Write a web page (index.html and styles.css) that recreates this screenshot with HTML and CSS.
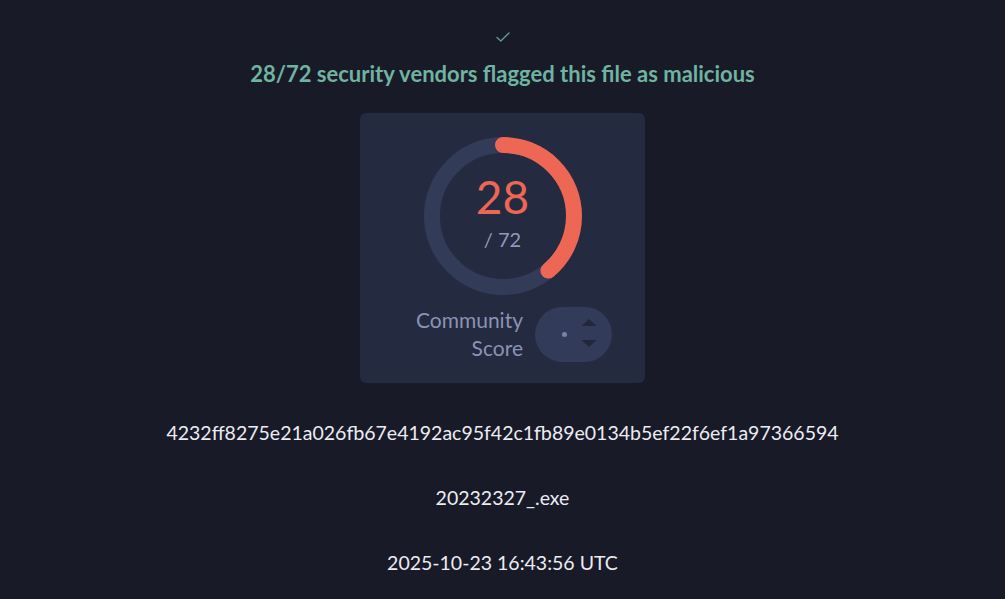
FILE: index.html
```html
<!DOCTYPE html>
<html lang="en">
<head>
<meta charset="utf-8">
<title>File report</title>
<link rel="stylesheet" href="styles.css">
</head>
<body>
<main class="page">
  <svg class="check" width="16" height="12" viewBox="0 0 16 12" aria-hidden="true">
    <path d="M2 6.5 L5.8 10 L14 2" fill="none" stroke="#5f9a97" stroke-width="1.4" stroke-linecap="round" stroke-linejoin="round"/>
  </svg>
  <h1 class="title">28/72 security vendors flagged this file as malicious</h1>
  <section class="card">
    <div class="donut">
      <svg width="160" height="160" viewBox="0 0 160 160" aria-hidden="true">
        <circle cx="80" cy="80" r="71" fill="none" stroke="#323b58" stroke-width="16"/>
        <circle cx="80" cy="80" r="71" fill="none" stroke="#ee6754" stroke-width="16" stroke-linecap="round" stroke-dasharray="173.5 1000" transform="rotate(-90 80 80)"/>
      </svg>
      <div class="donut-label">
        <span class="count">28</span>
        <span class="total">/ 72</span>
      </div>
    </div>
    <div class="community">
      <div class="community-label">Community<br>Score</div>
      <div class="vote">
        <span class="dot"></span>
        <span class="arrows">
          <svg width="20" height="36" viewBox="0 0 20 36" aria-hidden="true">
            <path d="M10 3 L17.5 10 L2.5 10 Z" fill="#222839"/>
            <path d="M2.5 24 L17.5 24 L10 31 Z" fill="#222839"/>
          </svg>
        </span>
      </div>
    </div>
  </section>
  <p class="meta">4232ff8275e21a026fb67e4192ac95f42c1fb89e0134b5ef22f6ef1a97366594</p>
  <p class="meta">20232327_.exe</p>
  <p class="meta">2025-10-23 16:43:56 UTC</p>
</main>
</body>
</html>
```
FILE: styles.css
```css
html, body {
  margin: 0;
  padding: 0;
  background: #181a28;
  font-family: Lato, "Open Sans", "Liberation Sans", sans-serif;
  color: #ececf2;
}

.page {
  display: flex;
  flex-direction: column;
  align-items: center;
  padding-top: 31px;
}

.check {
  display: block;
}

.title {
  margin: 17px 0 0;
  font-size: 22px;
  font-weight: 700;
  line-height: 28px;
  color: #6fb3a0;
}

.card {
  margin-top: 25px;
  width: 285px;
  height: 270px;
  box-sizing: border-box;
  padding-top: 23px;
  background: #242a40;
  border-radius: 6px;
  display: flex;
  flex-direction: column;
  align-items: center;
}

.donut {
  position: relative;
  width: 160px;
  height: 160px;
}

.donut svg {
  display: block;
}

.donut-label {
  position: absolute;
  inset: 0;
  display: flex;
  flex-direction: column;
  align-items: center;
  justify-content: center;
}

.count {
  font-size: 46px;
  line-height: 48px;
  color: #ee6754;
  margin-top: -8px;
}

.total {
  font-size: 20px;
  line-height: 24px;
  color: #8f9abd;
  margin-top: 6px;
}

.community {
  align-self: stretch;
  display: flex;
  justify-content: flex-end;
  align-items: center;
  gap: 12px;
  padding-right: 33px;
  margin-top: 10px;
}

.community-label {
  text-align: right;
  font-size: 21px;
  line-height: 28px;
  color: #8a93b4;
}

.vote {
  width: 77px;
  height: 55px;
  border-radius: 28px;
  background: #333b5a;
  display: flex;
  align-items: center;
  box-sizing: border-box;
  padding-left: 27px;
}

.dot {
  width: 5px;
  height: 5px;
  border-radius: 50%;
  background: #7a83a3;
}

.arrows {
  margin-left: 12px;
  display: flex;
}

.arrows svg {
  display: block;
}

.meta {
  margin: 0;
  font-size: 19.5px;
  line-height: 24px;
  color: #ececf2;
}

.card + .meta {
  margin-top: 38px;
}

.meta + .meta {
  margin-top: 41px;
}
```
